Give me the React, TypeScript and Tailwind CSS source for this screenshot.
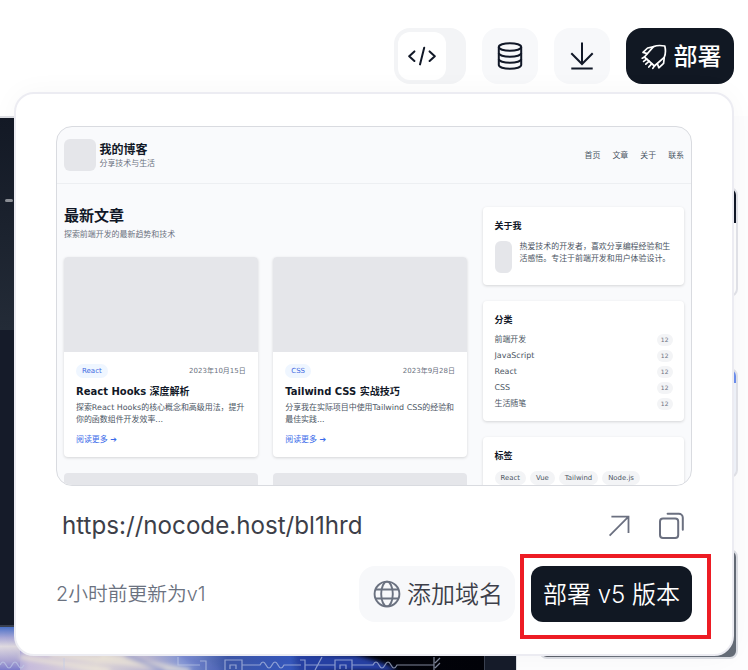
import type { ReactNode } from 'react';

const navLinks = ['首页', '文章', '关于', '联系'];

const articles = [
    {
        tag: 'React',
        date: '2023年10月15日',
        title: 'React Hooks 深度解析',
        lines: ['探索React Hooks的核心概念和高级用法，提升', '你的函数组件开发效率...'],
    },
    {
        tag: 'CSS',
        date: '2023年9月28日',
        title: 'Tailwind CSS 实战技巧',
        lines: ['分享我在实际项目中使用Tailwind CSS的经验和', '最佳实践...'],
    },
];

const categories = ['前端开发', 'JavaScript', 'React', 'CSS', '生活随笔'];
const tags = ['React', 'Vue', 'Tailwind', 'Node.js'];

const CodeIcon = () => (
    <svg width="28" height="20" viewBox="0 0 28 20" fill="none" stroke="#111827" strokeWidth="2" strokeLinecap="round" strokeLinejoin="round">
        <path d="M6.4 5.4 1.2 10.2l5.2 4.8M21.6 5.4l5.2 4.8-5.2 4.8M16.2 1.8 12 18.4" />
    </svg>
);

const DatabaseIcon = () => (
    <svg width="26" height="28" viewBox="0 0 26 28" fill="none" stroke="#111827" strokeWidth="2">
        <ellipse cx="13" cy="5" rx="11.2" ry="3.8" />
        <path d="M1.8 5v18c0 2.1 5 3.8 11.2 3.8s11.2-1.7 11.2-3.8V5" />
        <path d="M1.8 11c0 2.1 5 3.8 11.2 3.8s11.2-1.7 11.2-3.8M1.8 17c0 2.1 5 3.8 11.2 3.8s11.2-1.7 11.2-3.8" />
    </svg>
);

const DownloadIcon = () => (
    <svg width="24" height="28" viewBox="0 0 24 28" fill="none" stroke="#111827" strokeWidth="2">
        <path d="M12 .5v21M1.3 11.3 12 22l10.7-10.7M1.3 26.5h21.4" />
    </svg>
);

const RocketIcon = () => (
    <svg width="26" height="26" viewBox="0 0 26 26" fill="none" stroke="#fff" strokeWidth="1.7" strokeLinecap="round" strokeLinejoin="round">
        <path d="M3.4 13 12.5 2.6C15.5 1.4 19.5 1.2 23.8 2c1 4.4.8 8.4-.6 11.4L13.4 22z" />
        <path d="M12 2.8 6.6 4 2 8.4l4.2 1.2M23.2 13.8l-.6 5.6-4.8 4.4-1.4-4" />
        <path d="M3.6 13 1.2 14.2M5.8 15l-3.2 2.4M8.2 17.2l-3.4 3M10.8 19.6l-3 3.4M13.4 22l-1.6 2.4" />
    </svg>
);

const ExternalIcon = () => (
    <svg width="22" height="22" viewBox="0 0 22 22" fill="none" stroke="#6b7080" strokeWidth="1.8">
        <path d="M1.6 20.6 20.5 1.7M3.4 1.7h17.1V18" />
    </svg>
);

const CopyIcon = () => (
    <svg width="26" height="28" viewBox="0 0 26 28" fill="none" stroke="#6b7080" strokeWidth="2" strokeLinecap="round">
        <rect x="2" y="6.4" width="18.2" height="19.6" rx="3" />
        <path d="M9.6 1.8h11.2a4 4 0 0 1 4 4v12" />
    </svg>
);

const GlobeIcon = () => (
    <svg width="28" height="28" viewBox="0 0 28 28" fill="none" stroke="#6b7280" strokeWidth="1.9">
        <circle cx="14" cy="14" r="12.4" />
        <ellipse cx="14" cy="14" rx="5.8" ry="12.4" />
        <path d="M2.5 9.5h23M2.5 18.5h23" />
    </svg>
);

const SpacePhoto = () => (
    <svg width="484" height="43" viewBox="0 0 484 43" preserveAspectRatio="none" className="shrink-0">
        <defs>
            <linearGradient id="sky">
                <stop offset="0" stopColor="#8286cf" />
                <stop offset=".06" stopColor="#c8bddd" />
                <stop offset=".2" stopColor="#ddd5d8" />
                <stop offset=".3" stopColor="#bdb8d2" />
                <stop offset=".38" stopColor="#8496d6" />
                <stop offset=".47" stopColor="#3d57a8" />
                <stop offset=".6" stopColor="#3658bd" />
                <stop offset=".68" stopColor="#142356" />
                <stop offset=".74" stopColor="#03040c" />
                <stop offset="1" stopColor="#020309" />
            </linearGradient>
            <linearGradient id="edge" x2="0" y2="1">
                <stop offset="0" stopColor="#4b72c8" />
                <stop offset=".25" stopColor="#aaa9d8" />
                <stop offset=".45" stopColor="#dfdae0" />
                <stop offset=".8" stopColor="#a9a3d2" />
                <stop offset="1" stopColor="#7c7ccb" />
            </linearGradient>
            <filter id="soft"><feGaussianBlur stdDeviation="2" /></filter>
        </defs>
        <rect width="484" height="43" fill="url(#sky)" />
        <rect width="20" height="43" fill="url(#edge)" />
        <g filter="url(#soft)">
            <path d="M20 30 110 44M50 27l140 17M100 28l90 16" stroke="#f1ead9" strokeWidth="5" opacity=".7" />
            <path d="M125 28 165 44M180 28l40 16" stroke="#6071c8" strokeWidth="4" opacity=".5" />
            <path d="M295 28h60q30 7 42 16H300z" fill="#2740a4" />
        </g>
        <g fill="none" stroke="#c3cee9" strokeWidth="1.2" opacity=".65">
            <path d="M0 38q3-6 6 0t6 0 6 0 6 0M64 31v12M178 30v8h22M200 34h6v9M225 43V33h17v10M242 38h18q3-6 6 0t6 0 6 0 6 0h17M300 33h5v10M305 38h30M322 30l-7 13M335 43V33h17v10M352 38h21q3-6 6 0t6 0 6 0 6 0h37M434 30v13M440 31l-5 5M440 36l-5 5" />
            <path d="M230 42v-4h6v4M340 42v-4h6v4" />
        </g>
    </svg>
);

const SideCard = ({ title, className = '', children }: { title: string; className?: string; children: ReactNode }) => (
    <div className={`rounded bg-white px-[11.5px] pt-[11px] shadow-[0_1px_3px_rgba(0,0,0,0.15)] ${className}`}>
        <h3 className="text-[9px] leading-4 font-bold text-[#111827]">{title}</h3>
        {children}
    </div>
);

const BlogPreview = () => (
    <div className="h-[360px] overflow-hidden rounded-2xl border border-[#d9dbe0] bg-[#f9fafc] font-['DejaVu_Sans','Noto_Sans_CJK_SC',sans-serif] text-[7.95px] text-[#4b5563]">
        <header className="flex h-[57px] items-center border-b border-[#edeff2] px-[7px]">
            <div className="h-8 w-8 rounded-md bg-[#e5e6ea]" />
            <div className="ml-[3.5px] pt-0.5">
                <h1 className="text-[12px] leading-[15px] font-bold text-[#111827]">我的博客</h1>
                <p className="leading-[12px] text-[#6b7280]">分享技术与生活</p>
            </div>
            <nav className="ml-auto flex gap-3 pt-px">
                {navLinks.map((link) => <span key={link}>{link}</span>)}
            </nav>
        </header>

        <div className="flex gap-4 px-[7px] pt-[23px]">
            <main className="w-[403px]">
                <h2 className="text-[15px] leading-[18px] font-bold text-[#111827]">最新文章</h2>
                <p className="mt-1 leading-3 text-[#6b7280]">探索前端开发的最新趋势和技术</p>
                <div className="mt-4 grid grid-cols-2 gap-x-[15.5px] gap-y-4">
                    {articles.map((article) => (
                        <article key={article.title} className="h-[200px] overflow-hidden rounded bg-white shadow-[0_1px_3px_rgba(0,0,0,0.15)]">
                            <div className="h-[95px] bg-[#e5e6ea]" />
                            <div className="px-3 pt-3">
                                <div className="flex items-center justify-between">
                                    <span className="rounded-full bg-[#eff6ff] px-1.5 text-[7px] leading-[14px] text-[#4169e1]">{article.tag}</span>
                                    <span className="text-[7px] leading-[14px] text-[#6b7280]">{article.date}</span>
                                </div>
                                <h3 className="mt-1.5 text-[10px] leading-4 font-bold whitespace-nowrap text-[#111827]">{article.title}</h3>
                                <p className="mt-0.5 leading-3 whitespace-nowrap">
                                    {article.lines[0]}<br />{article.lines[1]}
                                </p>
                                <p className="mt-2 leading-3 text-[#3b6bea]">阅读更多 ➔</p>
                            </div>
                        </article>
                    ))}
                    <div className="h-20 rounded bg-[#e5e6ea]" />
                    <div className="h-20 rounded bg-[#e5e6ea]" />
                </div>
            </main>

            <aside className="flex w-[201px] flex-col gap-4">
                <SideCard title="关于我" className="h-[78px]">
                    <div className="mt-[7px] flex">
                        <div className="h-8 w-[17px] shrink-0 rounded-md bg-[#e5e6ea]" />
                        <p className="ml-2 leading-3 whitespace-nowrap">
                            热爱技术的开发者，喜欢分享编程经验和生<br />活感悟。专注于前端开发和用户体验设计。
                        </p>
                    </div>
                </SideCard>
                <SideCard title="分类" className="h-[120px]">
                    <ul className="mt-1">
                        {categories.map((name) => (
                            <li key={name} className="flex h-4 items-center justify-between">
                                <span>{name}</span>
                                <span className="rounded-full bg-[#f3f4f6] px-1 text-[6px] leading-[12px] text-[#6b7280]">12</span>
                            </li>
                        ))}
                    </ul>
                </SideCard>
                <SideCard title="标签" className="h-[78px]">
                    <div className="mt-[7px] flex gap-1">
                        {tags.map((tag) => (
                            <span key={tag} className="rounded-full bg-[#f3f4f6] px-1.5 text-[6.9px] leading-[14px]">{tag}</span>
                        ))}
                    </div>
                </SideCard>
            </aside>
        </div>
    </div>
);

export default function App() {
    return (
        <div className="relative flex h-[670px] w-[748px] flex-col overflow-hidden bg-white font-['Inter','Noto_Sans_CJK_SC',sans-serif]">
            <header className="flex h-[116px] shrink-0 items-start justify-end gap-4 pt-7 pr-3.5">
                <div className="h-14 w-[72px] rounded-2xl bg-[#f3f4f6] p-1">
                    <div className="flex h-12 w-12 items-center justify-center rounded-xl bg-white"><CodeIcon /></div>
                </div>
                <button className="flex h-14 w-14 items-center justify-center rounded-2xl bg-[#f7f8fa]"><DatabaseIcon /></button>
                <button className="flex h-14 w-14 items-center justify-center rounded-2xl bg-[#f7f8fa]"><DownloadIcon /></button>
                <button className="flex h-14 w-[108px] items-center justify-center gap-[7px] rounded-2xl bg-[#111823] pt-0.5 pl-0.5 text-[24px] font-medium text-white">
                    <RocketIcon />部署
                </button>
            </header>

            {/* workspace behind the deploy panel */}
            <div className="flex h-[554px] shrink-0">
                <div className="flex w-[517px] flex-col border-t-2 border-r border-[#dedfe4] bg-[#161c2a]">
                    <div className="h-[212px] bg-linear-to-b from-[#141a26] to-[#242c38] pt-[81px] pl-[5px]">
                        <div className="h-[3px] w-2 rounded-full bg-[#8d9097]" />
                    </div>
                    <div className="h-[297px] border-b-2 border-[#3a4150]" />
                    <div className="flex h-[43px]">
                        <SpacePhoto />
                        <div className="flex-1 border-l border-[#3a4150]" />
                    </div>
                </div>
                <div className="flex flex-1 flex-col gap-[71px] bg-[#fdfdfe] pt-[71px] pl-[22px]">
                    <div className="h-[110px] w-[199px] overflow-hidden rounded-lg border-2 border-[#e2e3e9] bg-white">
                        <div className="h-[34px] bg-[#111827]" />
                    </div>
                    <div className="h-[110px] w-[199px] overflow-hidden rounded-lg border-2 border-[#e2e3e9] bg-[#f1f4fb]">
                        <div className="h-[13px] bg-[#6d8fee]" />
                    </div>
                    <div className="h-[110px] w-[199px] rounded-lg border-2 border-[#dcdee4] bg-linear-to-r from-[#5b6069] via-[#6f7681] to-[#656c77]" />
                </div>
            </div>

            <section className="absolute top-[92px] left-[14px] h-[564px] w-[720px] rounded-[20px] border-2 border-[#ececf2] bg-white px-10 pt-8 shadow-[0_0_28px_rgba(0,0,0,0.035)]">
                <BlogPreview />
                <div className="mt-5 flex h-10 items-center pr-2 pl-1.5 text-[#3d3f49]">
                    <span className="text-[24.15px]">https://nocode.host/bl1hrd</span>
                    <div className="ml-auto flex items-center gap-7">
                        <ExternalIcon />
                        <CopyIcon />
                    </div>
                </div>
                <div className="mt-5 flex h-14 items-center">
                    <span className="pt-0.5 text-[19.8px] font-[350] text-[#6b7280]">2小时前更新为v1</span>
                    <button className="ml-auto flex h-14 w-[156px] items-center justify-center gap-1.5 rounded-2xl bg-[#f7f8fa] pl-0.5 text-[24px] font-[350] text-[#3d3f49]">
                        <GlobeIcon /><span className="pt-0.5">添加域名</span>
                    </button>
                    <button className="ml-4 h-14 w-[161px] rounded-xl bg-[#111823] pt-0.5 text-[24px] font-[350] whitespace-nowrap text-white">部署 v5 版本</button>
                </div>
                {/* highlight frame around the deploy action */}
                <div className="absolute top-[460px] left-[504px] h-[85px] w-[191px] border-4 border-[#ed1c24]" />
            </section>
        </div>
    );
}
